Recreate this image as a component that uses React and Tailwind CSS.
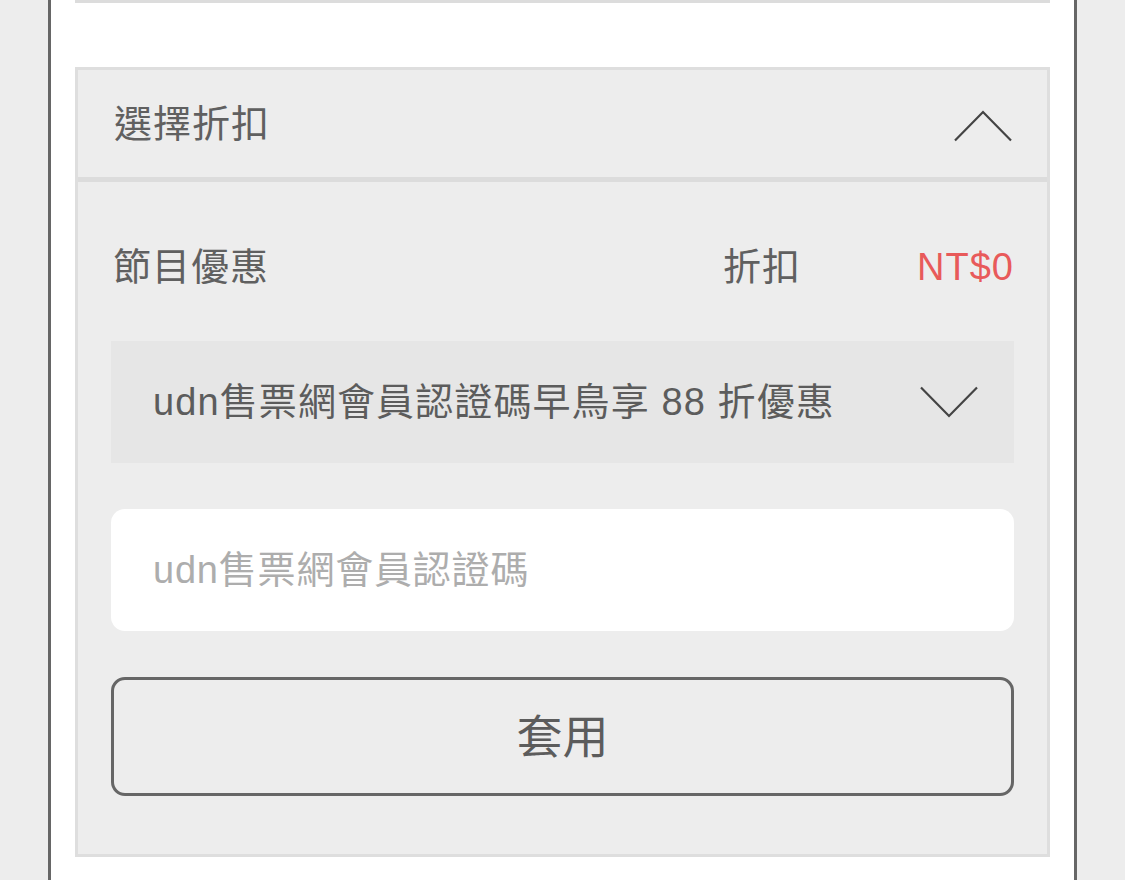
import React from 'react';

const font = { fontFamily: '"Liberation Sans", "Noto Sans CJK TC", sans-serif' };

const ChevronUp = () => (
  <svg width="60" height="32" viewBox="0 0 60 32" fill="none" className="shrink-0">
    <polyline points="2,30.5 30,2 58,30.5" stroke="#444" strokeWidth="2.2" />
  </svg>
);

const ChevronDown = () => (
  <svg width="60" height="32" viewBox="0 0 60 32" fill="none" className="shrink-0">
    <polyline points="2,1.5 30,30 58,1.5" stroke="#444" strokeWidth="2.2" />
  </svg>
);

const App = () => {
  return (
    <div className="min-h-screen bg-[#ededed] pl-[48px] pr-[48px]" style={font}>
      <div className="min-h-[880px] border-x-[3px] border-[#666] bg-white px-[24px]">
        {/* previous box edge */}
        <div className="h-[3px] bg-[#dcdcdc]" />

        <div className="mt-[64px] border-[3px] border-[#dedede] bg-[#ededed]">
          {/* header */}
          <div className="flex h-[107px] items-center justify-between pl-[36px] pr-[34px]">
            <span className="text-[38px] leading-none tracking-[1px] text-[#606060]">選擇折扣</span>
            <div className="pt-[4px]">
              <ChevronUp />
            </div>
          </div>
          <div className="h-[5px] bg-[#dcdcdc]" />

          {/* body */}
          <div className="px-[33px] pt-[60px] pb-[58px]">
            <div className="flex h-[50px] items-center text-[38px] leading-none tracking-[1px]">
              <span className="flex-1 pl-[2px] text-[#606060]">節目優惠</span>
              <span className="text-[#606060]">折扣</span>
              <span className="ml-[116px] text-[#e85a5a]">NT$0</span>
            </div>

            <div className="mt-[49px] flex h-[122px] items-center justify-between bg-[#e6e6e6] pl-[42px] pr-[35px]">
              <span className="text-[38px] leading-none tracking-[1.1px] text-[#5c5c5c]">
                udn售票網會員認證碼早鳥享 88 折優惠
              </span>
              <ChevronDown />
            </div>

            <div className="mt-[46px] flex h-[122px] items-center rounded-[14px] bg-white pl-[42px]">
              <span className="text-[38px] leading-none tracking-[0.8px] text-[#adadad]">udn售票網會員認證碼</span>
            </div>

            <button className="mt-[46px] flex h-[119px] w-full items-center justify-center rounded-[14px] border-[3px] border-[#666] text-[46px] leading-none text-[#5c5c5c]">
              套用
            </button>
          </div>
        </div>
      </div>
    </div>
  );
};

export default App;
